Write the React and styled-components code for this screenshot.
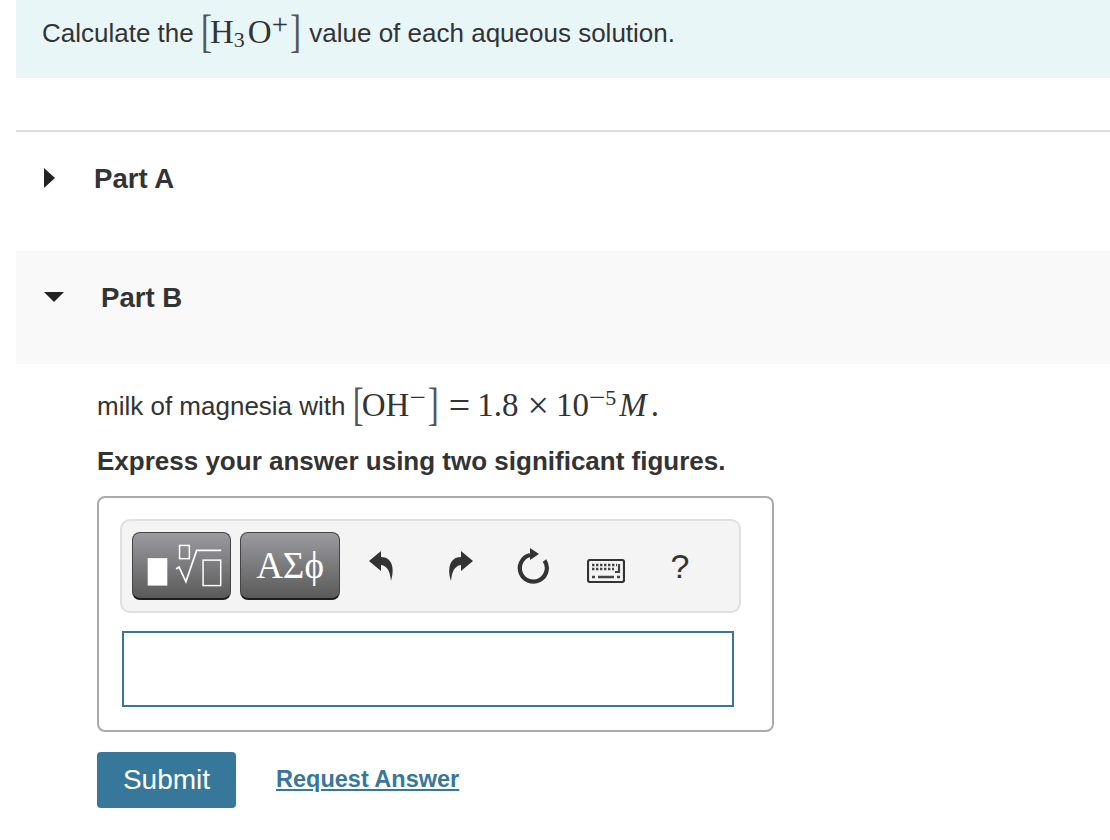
import React from "react";
import styled, { createGlobalStyle } from "styled-components";

const GlobalStyle = createGlobalStyle`
  html, body {
    margin: 0;
    padding: 0;
    background: #fff;
    font-family: "Liberation Sans", Arial, sans-serif;
    color: #333;
  }
`;

export default function App() {
  return (
    <Page>
      <GlobalStyle />
      <Intro>
        Calculate the{" "}
        <MathText>
          <OpenBracket>[</OpenBracket>H<Sub>3</Sub>O<SupSign>+</SupSign>
          <CloseBracket>]</CloseBracket>
        </MathText>{" "}
        value of each aqueous solution.
      </Intro>
      <Divider />
      <PartRow>
        <ArrowRight />
        <PartTitle>Part A</PartTitle>
      </PartRow>
      <PartRow $open>
        <ArrowDown />
        <PartTitle>Part B</PartTitle>
      </PartRow>
      <Content>
        <Question>
          milk of magnesia with{" "}
          <MathText>
            <OpenBracket>[</OpenBracket>OH<SupSign>−</SupSign>
            <CloseBracket>]</CloseBracket>
            <Op>=</Op>1.8<Op>×</Op>10<SupSign>−</SupSign>
            <Sup>5</Sup>
            <Italic>M</Italic>
            <Dot>.</Dot>
          </MathText>
        </Question>
        <Instruction>Express your answer using two significant figures.</Instruction>
        <AnswerBox>
          <Toolbar>
            <TemplateButton aria-label="Templates">
              <svg width="99" height="66" viewBox="0 0 99 66" fill="none">
                <rect x="15" y="25" width="20" height="28" fill="#fff" />
                <rect x="47.5" y="12" width="10" height="13.5" stroke="#fff" strokeWidth="1.5" />
                <path d="M44 36 L47 34 L54 49 L65 17 H90" stroke="#fff" strokeWidth="1.8" />
                <rect x="71.5" y="27" width="18" height="26" stroke="#fff" strokeWidth="1.5" />
              </svg>
            </TemplateButton>
            <SymbolButton>ΑΣϕ</SymbolButton>
            <ToolSlot $w={84}>
              <svg width="28" height="32" viewBox="0 0 28 32">
                <path d="M1 11 L13 1 V7 C24 7 27 18 23 31 C22 22 20 16 13 15 V21 Z" fill="#333" />
              </svg>
            </ToolSlot>
            <ToolSlot $w={72}>
              <svg width="28" height="32" viewBox="0 0 28 32">
                <path d="M27 11 L15 1 V7 C4 7 1 18 5 31 C6 22 8 16 15 15 V21 Z" fill="#333" />
              </svg>
            </ToolSlot>
            <ToolSlot $w={72}>
              <svg width="34" height="38" viewBox="0 0 34 38" fill="none">
                <path d="M15 8 A13.5 13.5 0 1 0 29.5 13.5" stroke="#333" strokeWidth="4.2" />
                <path d="M15 1 L24 7 L15 13 Z" fill="#333" />
              </svg>
            </ToolSlot>
            <ToolSlot $w={76}>
              <KeyboardIcon width="38" height="24" viewBox="0 0 38 24" fill="none">
                <rect x="1" y="1" width="36" height="22" rx="2" stroke="#333" strokeWidth="2.2" />
                <path d="M5 6 H30" stroke="#444" strokeWidth="2.4" strokeDasharray="2.4 1.6" />
                <path d="M5 10 H27" stroke="#444" strokeWidth="2.4" strokeDasharray="2.4 1.6" />
                <path d="M32 5 V13 H28" stroke="#444" strokeWidth="2.2" />
                <path d="M5 18 H8 M11 18 H27 M30 18 H33" stroke="#444" strokeWidth="2.4" />
              </KeyboardIcon>
            </ToolSlot>
            <ToolSlot $w={72}>
              <HelpMark>?</HelpMark>
            </ToolSlot>
          </Toolbar>
          <AnswerInput />
        </AnswerBox>
        <Actions>
          <SubmitButton>Submit</SubmitButton>
          <RequestLink href="#">Request Answer</RequestLink>
        </Actions>
      </Content>
    </Page>
  );
}

const Page = styled.div`
  width: 1110px;
  height: 840px;
  padding-left: 16px;
  box-sizing: border-box;
  overflow: hidden;
`;

const Intro = styled.div`
  height: 78px;
  box-sizing: border-box;
  padding: 14px 0 0 26px;
  background: #e8f6f7;
  font-size: 26px;
  line-height: 38px;
  white-space: nowrap;
`;

const MathText = styled.span`
  font-family: "Liberation Serif", "Times New Roman", serif;
  font-size: 33px;
  line-height: 1px;
  vertical-align: -1px;
`;

const OpenBracket = styled.span`
  display: inline-block;
  color: #555;
  transform: scaleY(1.4);
  margin-right: -2px;
`;

const CloseBracket = styled.span`
  display: inline-block;
  color: #555;
  transform: scaleY(1.4);
  margin: 0 1px 0 2px;
`;

const Sub = styled.sub`
  font-size: 22px;
  line-height: 1px;
  vertical-align: -4px;
  margin-right: 3px;
`;

const Sup = styled.sup`
  font-size: 22px;
  line-height: 1px;
  vertical-align: 11px;
`;

const SupSign = styled.sup`
  font-size: 29px;
  line-height: 1px;
  vertical-align: 9px;
`;

const Op = styled.span`
  font-size: 38px;
  line-height: 1px;
  margin: 0 7px 0 9px;
  vertical-align: -2px;
`;

const Italic = styled.i`
  font-style: italic;
  margin-left: 3px;
`;

const Dot = styled.span`
  margin-left: 4px;
`;

const Divider = styled.div`
  height: 2px;
  margin-top: 52px;
  background: #ddd;
`;

const PartRow = styled.div`
  display: flex;
  align-items: flex-start;
  height: ${(p) => (p.$open ? "113px" : "119px")};
  box-sizing: border-box;
  padding: 31px 0 0 28px;
  background: ${(p) => (p.$open ? "#f9f9f9" : "#fff")};
`;

const ArrowRight = styled.span`
  width: 0;
  height: 0;
  margin: 5px 39px 0 0;
  border-style: solid;
  border-width: 10px 0 10px 11px;
  border-color: transparent transparent transparent #222;
`;

const ArrowDown = styled.span`
  width: 0;
  height: 0;
  margin: 10px 37px 0 0;
  border-style: solid;
  border-width: 10px 10.5px 0 10.5px;
  border-color: #222 transparent transparent transparent;
`;

const PartTitle = styled.div`
  font-size: 27.6px;
  line-height: 32px;
  font-weight: 700;
  color: #333;
`;

const Content = styled.div`
  padding: 23px 0 0 81px;
`;

const Question = styled.div`
  height: 38px;
  font-size: 26px;
  line-height: 38px;
  white-space: nowrap;
`;

const Instruction = styled.div`
  margin-top: 17px;
  height: 38px;
  font-size: 26px;
  line-height: 38px;
  font-weight: 700;
  white-space: nowrap;
`;

const AnswerBox = styled.div`
  width: 677px;
  height: 236px;
  margin-top: 16px;
  box-sizing: border-box;
  padding: 21px 0 0 21px;
  border: 2px solid #aaa;
  border-radius: 8px;
`;

const Toolbar = styled.div`
  display: flex;
  align-items: center;
  width: 621px;
  height: 94px;
  box-sizing: border-box;
  padding-left: 10px;
  background: #f4f4f4;
  border: 2px solid #e0e0e0;
  border-radius: 10px;
`;

const ToolButton = styled.button`
  display: flex;
  align-items: center;
  justify-content: center;
  height: 68px;
  padding: 0;
  box-sizing: border-box;
  background: linear-gradient(#9b9ba0, #5a5a5a);
  border: 1px solid #444;
  border-bottom: 2px solid #1c1c1c;
  border-radius: 8px;
  color: #fff;
`;

const TemplateButton = styled(ToolButton)`
  width: 99px;
`;

const SymbolButton = styled(ToolButton)`
  width: 100px;
  margin-left: 9px;
  font-family: "Liberation Serif", "Times New Roman", serif;
  font-size: 37px;
`;

const ToolSlot = styled.div`
  display: flex;
  align-items: center;
  justify-content: center;
  width: ${(p) => p.$w}px;
  height: 40px;
`;

const KeyboardIcon = styled.svg`
  margin-top: 10px;
`;

const HelpMark = styled.span`
  font-size: 34px;
  line-height: 34px;
  color: #333;
`;

const AnswerInput = styled.input`
  display: block;
  width: 612px;
  height: 76px;
  margin: 18px 0 0 2px;
  box-sizing: border-box;
  border: 2px solid #37779a;
  border-radius: 0;
  background: #fff;
  outline: none;
`;

const Actions = styled.div`
  display: flex;
  align-items: center;
  margin-top: 20px;
`;

const SubmitButton = styled.button`
  width: 139px;
  height: 56px;
  padding: 0;
  background: #37779a;
  border: none;
  border-radius: 4px;
  color: #fff;
  font-family: "Liberation Sans", Arial, sans-serif;
  font-size: 28px;
`;

const RequestLink = styled.a`
  margin-left: 40px;
  padding-bottom: 2px;
  color: #37779a;
  font-size: 23.5px;
  font-weight: 700;
  text-decoration: underline;
`;
